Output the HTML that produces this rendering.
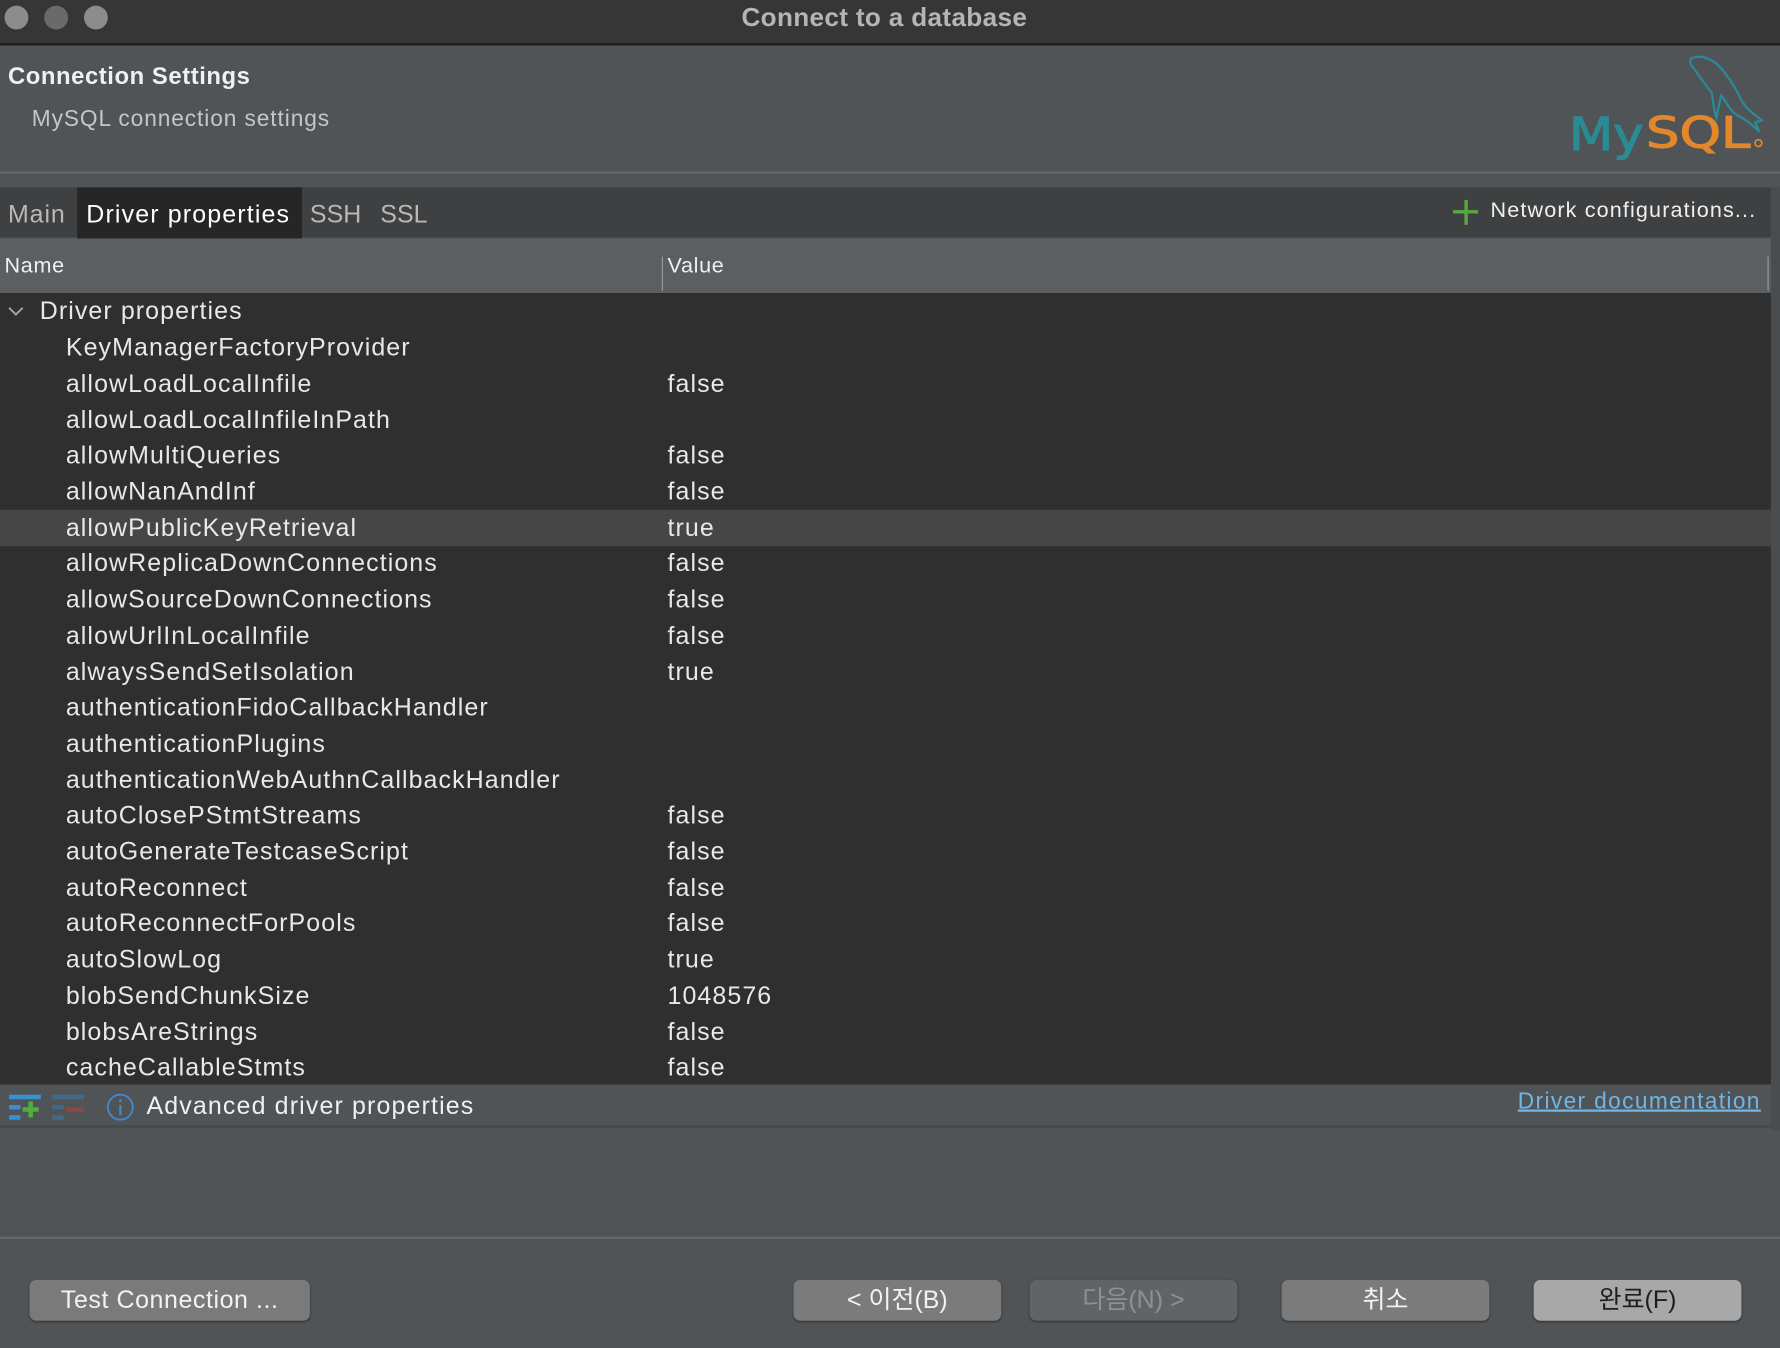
<!DOCTYPE html>
<html><head><meta charset="utf-8"><style>
*{margin:0;padding:0;box-sizing:border-box}
html,body{width:1780px;height:1348px;overflow:hidden;background:#505457}
#w{position:absolute;left:0;top:0;width:1568px;height:1187px;transform:scale(1.1352,1.1356);transform-origin:0 0;font-family:"Liberation Sans","Noto Sans CJK KR",sans-serif;color:#e8e8e8;background:#505457}
.a{position:absolute;white-space:nowrap}
.row{position:absolute;left:0;width:1560px;height:32px;font-size:22px;line-height:32px;letter-spacing:0.95px}
.row .n{position:absolute;left:58px}
.row .v{position:absolute;left:588px}
.btn{position:absolute;top:1127px;height:36px;border-radius:6px;font-size:22px;line-height:36px;text-align:center;box-shadow:0 1px 2px rgba(0,0,0,.4)}
</style></head><body><div id="w">
<div class="a" style="left:0;top:0;width:1568px;height:40px;background:#363636;border-bottom:2px solid #1c1c1c"></div>
<div class="a" style="left:4px;top:5px;width:21px;height:21px;border-radius:50%;background:#8c8c8c"></div>
<div class="a" style="left:39px;top:5px;width:21px;height:21px;border-radius:50%;background:#6a6a6a"></div>
<div class="a" style="left:74px;top:5px;width:21px;height:21px;border-radius:50%;background:#8c8c8c"></div>
<div class="a" style="left:0;width:1558px;top:2px;text-align:center;font-size:23px;font-weight:bold;color:#b5b5b5;letter-spacing:0.3px">Connect to a database</div>
<div class="a" style="left:7px;top:56px;font-size:21px;font-weight:bold;color:#f0f0f0;letter-spacing:0.5px">Connection Settings</div>
<div class="a" style="left:28px;top:94px;font-size:20px;color:#c6c6c6;letter-spacing:0.8px">MySQL connection settings</div>
<svg class="a" style="left:1376px;top:46px" width="185" height="95" viewBox="0 0 185 95">
<path d="M113 6 C120 2 130 4 138 12 C146 20 152 30 158 42 C162 50 170 55 176 60 L170 62 L174 70 L165 62 C160 58 154 56 150 52 C146 48 144 42 140 38 L138 48 L136 58 C134 52 133 44 132 36 C126 28 120 20 113 10 Z" fill="none" stroke="#2a8b94" stroke-width="2"/>
<text x="6" y="86" font-family="DejaVu Sans,sans-serif" font-size="40" fill="#2a8b94" textLength="66" lengthAdjust="spacingAndGlyphs" stroke="#2a8b94" stroke-width="1">My</text>
<text x="74" y="84" font-family="DejaVu Sans,sans-serif" font-size="38" fill="#e3872b" textLength="92" lengthAdjust="spacingAndGlyphs" stroke="#e3872b" stroke-width="1">SQL</text>
<circle cx="173" cy="80" r="3" fill="none" stroke="#e3872b" stroke-width="1.5"/>
</svg>
<div class="a" style="left:0;top:151px;width:1568px;height:2px;background:#64686b"></div>
<div class="a" style="left:0;top:165px;width:1560px;height:44px;background:#3e4042"></div>
<div class="a" style="left:68px;top:165px;width:198px;height:45px;background:#262626"></div>
<div class="a" style="left:7px;top:176px;font-size:22px;color:#b8b8b8;letter-spacing:0.8px">Main</div>
<div class="a" style="left:76px;top:176px;font-size:22px;color:#fff;letter-spacing:1px">Driver properties</div>
<div class="a" style="left:273px;top:176px;font-size:22px;color:#b8b8b8">SSH</div>
<div class="a" style="left:335px;top:176px;font-size:22px;color:#b8b8b8">SSL</div>
<div class="a" style="left:1280px;top:185px;width:22px;height:3px;background:#56a842"></div>
<div class="a" style="left:1289.5px;top:176px;width:3px;height:22px;background:#56a842"></div>
<div class="a" style="left:1313px;top:175px;font-size:19px;color:#f0f0f0;letter-spacing:1px">Network configurations...</div>
<div class="a" style="left:0;top:210px;width:1560px;height:48px;background:#5b5f61"></div>
<div class="a" style="left:4px;top:224px;font-size:19px;color:#f0f0f0;letter-spacing:0.6px">Name</div>
<div class="a" style="left:583px;top:226px;width:1px;height:30px;background:#9a9a9a"></div>
<div class="a" style="left:1557px;top:226px;width:1px;height:30px;background:#9a9a9a"></div>
<div class="a" style="left:588px;top:224px;font-size:19px;color:#f0f0f0;letter-spacing:0.6px">Value</div>
<div class="a" style="left:0;top:258px;width:1560px;height:697px;background:#2f2f2f"></div>
<div class="a" style="left:1560px;top:165px;width:8px;height:830px;background:#4a4d50"></div>
<svg class="a" style="left:6px;top:268px" width="16" height="12"><path d="M2 3 L8 9 L14 3" fill="none" stroke="#aaa" stroke-width="1.6"/></svg>
<div class="row" style="top:258px"><span class="n" style="left:35px">Driver properties</span></div>
<div class="row" style="top:290px"><span class="n">KeyManagerFactoryProvider</span></div>
<div class="row" style="top:322px"><span class="n">allowLoadLocalInfile</span><span class="v">false</span></div>
<div class="row" style="top:354px"><span class="n">allowLoadLocalInfileInPath</span></div>
<div class="row" style="top:385px"><span class="n">allowMultiQueries</span><span class="v">false</span></div>
<div class="row" style="top:417px"><span class="n">allowNanAndInf</span><span class="v">false</span></div>
<div class="row" style="top:449px;background:#464646"><span class="n">allowPublicKeyRetrieval</span><span class="v">true</span></div>
<div class="row" style="top:480px"><span class="n">allowReplicaDownConnections</span><span class="v">false</span></div>
<div class="row" style="top:512px"><span class="n">allowSourceDownConnections</span><span class="v">false</span></div>
<div class="row" style="top:544px"><span class="n">allowUrlInLocalInfile</span><span class="v">false</span></div>
<div class="row" style="top:576px"><span class="n">alwaysSendSetIsolation</span><span class="v">true</span></div>
<div class="row" style="top:607px"><span class="n">authenticationFidoCallbackHandler</span></div>
<div class="row" style="top:639px"><span class="n">authenticationPlugins</span></div>
<div class="row" style="top:671px"><span class="n">authenticationWebAuthnCallbackHandler</span></div>
<div class="row" style="top:702px"><span class="n">autoClosePStmtStreams</span><span class="v">false</span></div>
<div class="row" style="top:734px"><span class="n">autoGenerateTestcaseScript</span><span class="v">false</span></div>
<div class="row" style="top:766px"><span class="n">autoReconnect</span><span class="v">false</span></div>
<div class="row" style="top:797px"><span class="n">autoReconnectForPools</span><span class="v">false</span></div>
<div class="row" style="top:829px"><span class="n">autoSlowLog</span><span class="v">true</span></div>
<div class="row" style="top:861px"><span class="n">blobSendChunkSize</span><span class="v">1048576</span></div>
<div class="row" style="top:893px"><span class="n">blobsAreStrings</span><span class="v">false</span></div>
<div class="row" style="top:924px"><span class="n">cacheCallableStmts</span><span class="v">false</span></div>
<div class="a" style="left:0;top:955px;width:1560px;height:38px;background:#505457;border-bottom:2px solid #45484b"></div>
<svg class="a" style="left:6px;top:962px" width="80" height="26">
<rect x="2" y="2" width="28" height="4" fill="#3a8fd0"/><rect x="2" y="11" width="10" height="4" fill="#3a8fd0"/><rect x="2" y="20" width="10" height="4" fill="#3a8fd0"/>
<rect x="14" y="13" width="14" height="4" fill="#4fb03c"/><rect x="19" y="8" width="4" height="14" fill="#4fb03c"/>
<rect x="40" y="2" width="28" height="4" fill="#3f6a8a"/><rect x="40" y="11" width="10" height="4" fill="#3f6a8a"/><rect x="40" y="20" width="10" height="4" fill="#3f6a8a"/>
<rect x="52" y="13" width="16" height="4" fill="#8a4a44"/>
</svg>
<svg class="a" style="left:93px;top:962px" width="26" height="26"><circle cx="13" cy="13" r="11" fill="none" stroke="#3f8ad0" stroke-width="1.6"/><rect x="12" y="11" width="2" height="9" fill="#3f8ad0"/><rect x="12" y="6" width="2" height="2.5" fill="#3f8ad0"/></svg>
<div class="a" style="left:129px;top:961px;font-size:22px;color:#f0f0f0;letter-spacing:1px">Advanced driver properties</div>
<div class="a" style="left:1337px;top:959px;font-size:20px;color:#6fb6e8;text-decoration:underline;letter-spacing:1.2px">Driver documentation</div>
<div class="a" style="left:0;top:1089px;width:1568px;height:2px;background:#64686b"></div>
<div class="btn" style="left:26px;width:247px;background:#7a7a7a;color:#f2f2f2;letter-spacing:0.5px">Test Connection ...</div>
<div class="btn" style="left:699px;width:183px;background:#7b7b7b;color:#f2f2f2">&lt; 이전(B)</div>
<div class="btn" style="left:907px;width:183px;background:#606466;color:#8e9193">다음(N) &gt;</div>
<div class="btn" style="left:1129px;width:183px;background:#7b7b7b;color:#f2f2f2">취소</div>
<div class="btn" style="left:1351px;width:183px;background:#a8a8a8;color:#1e1e1e">완료(F)</div>
</div></body></html>
